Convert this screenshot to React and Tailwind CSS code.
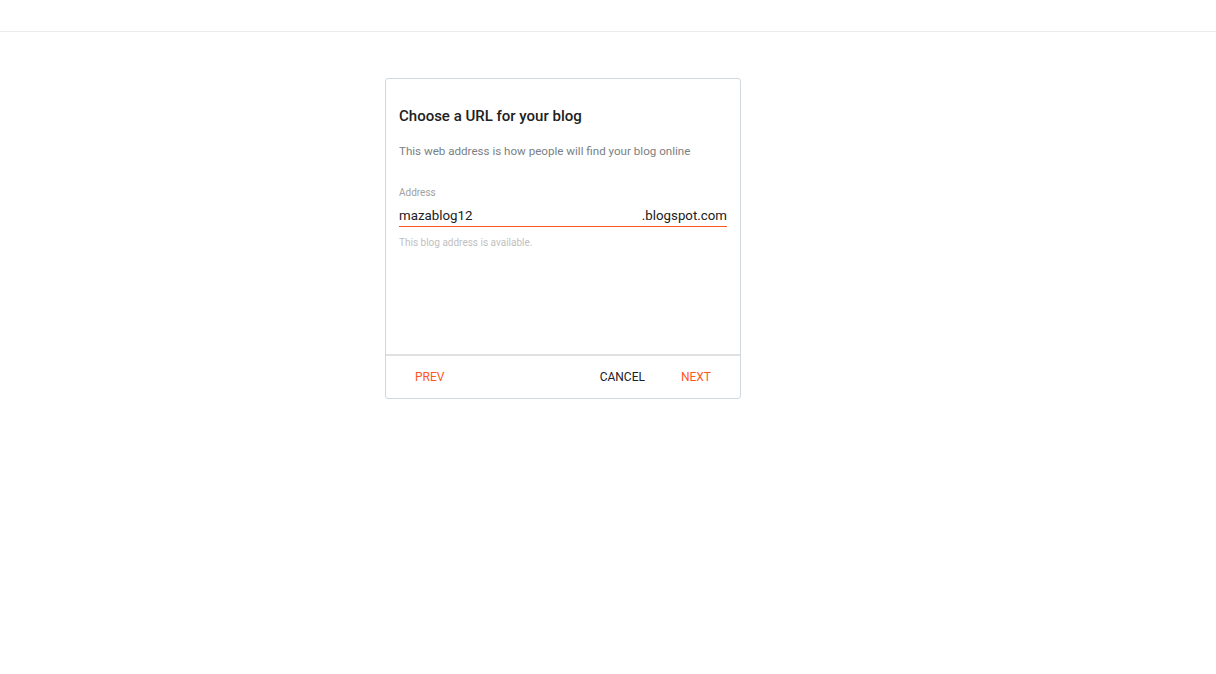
export default function App() {
  return (
    <div className="min-h-[674px] bg-white" style={{ fontFamily: "Roboto, 'Noto Sans', sans-serif" }}>
      <div className="h-[32px] border-b border-[#ebebeb]" />
      <div className="pt-[46px] pl-[385px]">
        <div className="w-[356px] h-[321px] border border-[#cfd8dc] rounded-[3px] flex flex-col bg-white">
          <div className="flex-1 px-[13px] pt-[27px]">
            <div className="text-[15px] font-medium text-[#212121] leading-[20px]">Choose a URL for your blog</div>
            <div className="mt-[17px] text-[11.6px] text-[#7a7f84] leading-[16px]">This web address is how people will find your blog online</div>
            <div className="mt-[28px] text-[10px] text-[#a0a0a0] leading-[12px]">Address</div>
            <div className="mt-[8px] flex items-center justify-between pb-[1px] text-[13.3px] text-[#212121] leading-[18px]">
              <span>mazablog12</span>
              <span>.blogspot.com</span>
            </div>
            <div className="h-[1px] bg-[#ff5722]" />
            <div className="mt-[10px] text-[10px] text-[#c0c0c0] leading-[12px]">This blog address is available.</div>
          </div>
          <div className="h-[44px] border-t-2 border-[#dfe1e3] flex items-center px-[20px] text-[12px] font-normal">
            <button className="px-[9px] text-[#ff5722]">PREV</button>
            <div className="flex-1" />
            <button className="px-[9px] text-[#212121]">CANCEL</button>
            <button className="ml-[18px] px-[9px] text-[#ff5722]">NEXT</button>
          </div>
        </div>
      </div>
    </div>
  );
}
